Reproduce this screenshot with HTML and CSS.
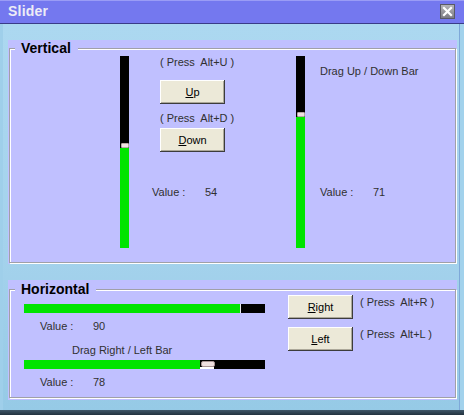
FILE: index.html
```html
<!DOCTYPE html>
<html>
<head>
<meta charset="utf-8">
<link rel="stylesheet" href="styles.css">
</head>
<body>
<div class="window">
  <div class="titlebar">
    <span class="title">Slider</span>
    <span class="close">
      <svg width="13" height="13" viewBox="0 0 13 13"><path d="M3 3 L10 10 M10 3 L3 10" stroke="#fff" stroke-width="2.2" stroke-linecap="square"/></svg>
    </span>
  </div>
  <div class="client">
    <div class="group group-v">
      <div class="frame frame-v">
        <div class="vslider vs1">
          <div class="track-off"></div>
          <div class="vthumb"></div>
          <div class="track-on" style="height:100px"></div>
        </div>
        <div class="col col2">
          <div class="txt hint">( Press&nbsp; Alt+U )</div>
          <button class="btn btn-up"><u>U</u>p</button>
          <div class="txt hint hint-d">( Press&nbsp; Alt+D )</div>
          <button class="btn btn-down"><u>D</u>own</button>
          <div class="txt value value-v"><span class="vlabel">Value :</span><span>54</span></div>
        </div>
        <div class="vslider vs2">
          <div class="track-off"></div>
          <div class="vthumb"></div>
          <div class="track-on" style="height:131px"></div>
        </div>
        <div class="col col3">
          <div class="txt drag-v">Drag Up / Down Bar</div>
          <div class="txt value value-v3"><span class="vlabel">Value :</span><span>71</span></div>
        </div>
      </div>
      <div class="legend">Vertical</div>
    </div>
    <div class="group group-h">
      <div class="frame frame-h">
        <div class="hcol">
          <div class="hslider hs1">
            <div class="track-on" style="width:216px"></div>
            <div class="hthumb-thin"></div>
            <div class="track-off"></div>
          </div>
          <div class="txt value value-h1"><span class="vlabel">Value :</span><span>90</span></div>
          <div class="txt drag-h">Drag Right / Left Bar</div>
          <div class="hslider hs2">
            <div class="track-on" style="width:176px"></div>
            <div class="hthumb"></div>
            <div class="track-off"></div>
          </div>
          <div class="txt value value-h2"><span class="vlabel">Value :</span><span>78</span></div>
        </div>
        <div class="bcol">
          <div class="brow">
            <button class="btn"><u>R</u>ight</button>
            <div class="txt hint-r">( Press&nbsp; Alt+R )</div>
          </div>
          <div class="brow brow2">
            <button class="btn"><u>L</u>eft</button>
            <div class="txt hint-r">( Press&nbsp; Alt+L )</div>
          </div>
        </div>
      </div>
      <div class="legend">Horizontal</div>
    </div>
  </div>
  <div class="bottom"></div>
</div>
</body>
</html>
```
FILE: styles.css
```css
html, body {
  margin: 0;
  padding: 0;
}
body {
  width: 464px;
  height: 415px;
  overflow: hidden;
  font-family: "Liberation Sans", Arial, sans-serif;
}
.window {
  width: 464px;
  height: 415px;
  display: flex;
  flex-direction: column;
}
.titlebar {
  position: relative;
  height: 23px;
  flex: none;
  background: #7478ef;
  border-bottom: 1px solid #3a3c88;
  box-shadow: inset 0 1px 0 #9a9cf6;
}
.title {
  position: absolute;
  left: 8px;
  top: 3px;
  font-weight: bold;
  font-size: 14px;
  line-height: 17px;
  color: #ececf6;
  letter-spacing: 0.2px;
}
.close {
  position: absolute;
  left: 440px;
  top: 4px;
  width: 15px;
  height: 15px;
  box-sizing: border-box;
  border: 1px solid #5a5a64;
  background: linear-gradient(#b4b4b8, #7c7c84);
  display: flex;
  align-items: center;
  justify-content: center;
}
.close svg { display: block; }
.client {
  flex: 1;
  padding: 16px 7px 0 8px;
  background: linear-gradient(180deg, #acd8f0 0%, #a4d2ec 60%, #96cae6 100%);
  box-shadow: inset 3px 0 0 #9fcfea, inset -4px 0 0 #a2d2ec, inset -5px 0 0 #7ea8d8;
}
.bottom {
  height: 5px;
  flex: none;
  background: linear-gradient(#3e5668, #22323e);
}
.group {
  position: relative;
  background: #c0c0ff;
  padding: 8px 1px 1px 1px;
  box-sizing: border-box;
  display: flex;
}
.group-v { height: 224px; }
.group-h { height: 120px; margin-top: 16px; padding-top: 9px; padding-bottom: 2px; }
.frame {
  flex: 1;
  border: 1px solid #a0a0a8;
  box-shadow: inset 1px 1px 0 #ffffff, 1px 1px 0 #ffffff;
  display: flex;
  align-items: flex-start;
}
.legend {
  position: absolute;
  left: 7px;
  top: 0;
  padding: 0 7px 0 6px;
  background: #c0c0ff;
  font-weight: bold;
  font-size: 14px;
  line-height: 17px;
  color: #000;
}
.group-h .legend { top: 1px; }
.txt {
  font-size: 11px;
  line-height: 13px;
  color: #303030;
  white-space: nowrap;
}
.frame-v { padding-top: 7px; }
.vslider {
  width: 9px;
  height: 192px;
  display: flex;
  flex-direction: column;
  flex: none;
}
.vs1 { margin-left: 110px; }
.track-off { background: #000; flex: 1; }
.track-on { background: #00e400; flex: none; }
.vslider .track-on { width: 9px; }
.vthumb {
  height: 5px;
  flex: none;
  box-sizing: border-box;
  background: #000;
  position: relative;
}
.vthumb::after {
  content: "";
  position: absolute;
  left: 1px;
  right: 0;
  top: 0;
  bottom: 0;
  background: #efe2e2;
  border: 1px solid #b8a8a8;
  border-radius: 1px;
}
.col { display: flex; flex-direction: column; align-items: flex-start; flex: none; }
.col2 { width: 144px; margin-left: 23px; }
.col3 { margin-left: 15px; }
.hint { margin-left: 8px; }
.btn {
  width: 65px;
  height: 24px;
  margin: 0;
  padding: 0;
  border: none;
  background: #ece9d8;
  box-shadow: inset -1px -1px 0 #3c3c3c, inset 1px 1px 0 #ffffff, inset -2px -2px 0 #aca899;
  font-family: "Liberation Sans", Arial, sans-serif;
  font-size: 11px;
  color: #000;
  text-align: center;
  display: block;
}
.btn u { text-decoration: underline; text-underline-offset: 1px; }
.btn-up { margin: 11px 0 0 8px; }
.hint-d { margin-top: 8px; }
.btn-down { margin: 3px 0 0 8px; }
.value { display: flex; }
.vlabel { width: 53px; display: inline-block; }
.value-v { margin-top: 34px; }
.drag-v { margin-top: 9px; }
.value-v3 { margin-top: 108px; }

.hcol {
  width: 241px;
  margin-left: 14px;
  display: flex;
  flex-direction: column;
  flex: none;
}
.hslider {
  height: 9px;
  display: flex;
  flex: none;
}
.hs1 { margin-top: 14px; }
.hthumb-thin { width: 1px; background: #e8e8f0; }
.hthumb {
  width: 15px;
  position: relative;
  background: #000;
}
.hthumb::before {
  content: "";
  position: absolute;
  left: 1px;
  top: 1px;
  width: 12px;
  height: 4px;
  background: #efe0e0;
  border: 1px solid #a89494;
  border-radius: 2px;
}
.hthumb::after {
  content: "";
  position: absolute;
  left: 0;
  width: 14px;
  top: 7px;
  height: 2px;
  background: #fff;
}
.value-h1 { margin-top: 7px; padding-left: 16px; }
.drag-h { margin-top: 11px; padding-left: 48px; }
.hs2 { margin-top: 3px; }
.value-h2 { margin-top: 7px; padding-left: 16px; }
.bcol {
  margin-left: 23px;
  margin-top: 5px;
  display: flex;
  flex-direction: column;
}
.brow { display: flex; align-items: flex-start; }
.brow2 { margin-top: 8px; }
.hint-r { margin-left: 7px; margin-top: 1px; }
```
